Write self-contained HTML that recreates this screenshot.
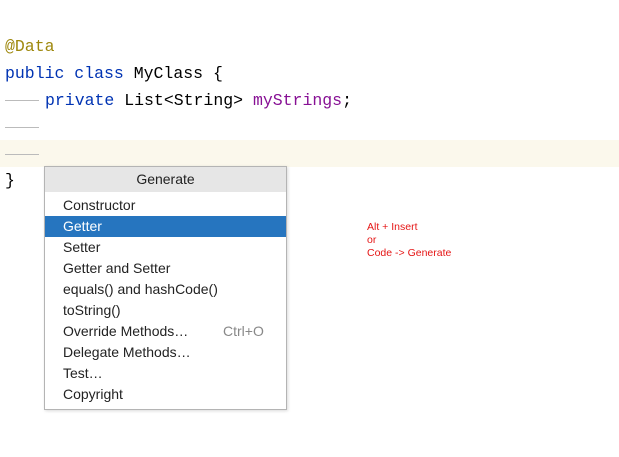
<!DOCTYPE html>
<html><head><meta charset="utf-8"><style>
body{margin:0;width:619px;height:457px;background:#fff;position:relative;overflow:hidden;font-family:"Liberation Sans",sans-serif}
.code{position:absolute;left:5px;font-family:"Liberation Mono",monospace;font-size:16.5px;white-space:pre;line-height:20px}
.kw{color:#0033b3}.an{color:#9e880d}.fld{color:#871094}
.guide{position:absolute;height:1px;background:#bbb}
.menu{position:absolute;left:44px;top:166px;width:241px;height:242px;border:1px solid #b4b4b4;background:#fff;box-shadow:1px 1px 3px rgba(0,0,0,.15)}
.hdr{height:25px;background:#e6e6e6;text-align:center;font-size:14px;line-height:25px;color:#222}
.it{position:absolute;left:0;width:241px;height:21px;line-height:21px;font-size:14px;color:#222;padding-left:18px;box-sizing:border-box}
.sel{background:#2675bf;color:#fff}
.red{position:absolute;left:367px;font-size:10.5px;color:#e51515;line-height:13px}
</style></head><body>
<div style="position:absolute;left:0;top:140px;width:619px;height:27px;background:#fbf8ec"></div>
<div class="code an" style="top:37px">@Data</div>
<div class="code" style="top:64px"><span class="kw">public class</span> MyClass {</div>
<div class="guide" style="left:5px;top:100px;width:34px"></div>
<div class="code" style="top:91px;left:45px"><span class="kw">private</span> List&lt;String&gt; <span class="fld">myStrings</span>;</div>
<div class="guide" style="left:5px;top:127px;width:34px"></div>
<div class="guide" style="left:5px;top:154px;width:34px"></div>
<div class="code" style="top:171px">}</div>
<div class="menu">
<div class="hdr">Generate</div>
<div class="it" style="top:28px">Constructor</div>
<div class="it sel" style="top:49px">Getter</div>
<div class="it" style="top:70px">Setter</div>
<div class="it" style="top:91px">Getter and Setter</div>
<div class="it" style="top:112px">equals() and hashCode()</div>
<div class="it" style="top:133px">toString()</div>
<div class="it" style="top:154px">Override Methods…<span style="position:absolute;left:178px;color:#888">Ctrl+O</span></div>
<div class="it" style="top:175px">Delegate Methods…</div>
<div class="it" style="top:196px">Test…</div>
<div class="it" style="top:217px">Copyright</div>
</div>
<div class="red" style="top:221px">Alt + Insert</div>
<div class="red" style="top:234px">or</div>
<div class="red" style="top:247px">Code -&gt; Generate</div>
</body></html>
